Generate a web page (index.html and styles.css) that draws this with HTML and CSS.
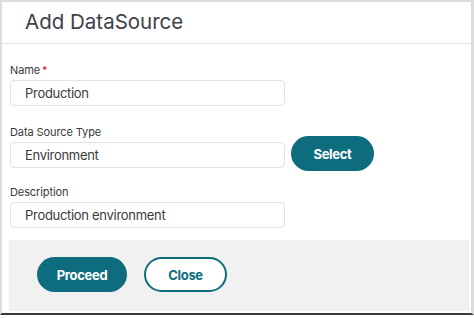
FILE: index.html
```html
<!DOCTYPE html>
<html lang="en">
<head>
    <meta charset="UTF-8">
    <title>Add DataSource</title>
    <link rel="stylesheet" href="styles.css">
</head>
<body>
<div class="dialog">
    <div class="dialog-header">Add DataSource</div>
    <div class="dialog-body">
        <label class="field-label">Name<span class="required">*</span></label>
        <div class="input">Production</div>

        <label class="field-label">Data Source Type</label>
        <div class="input-row">
            <div class="input">Environment</div>
            <button class="btn btn-primary btn-select">Select</button>
        </div>

        <label class="field-label">Description</label>
        <div class="input input-last">Production environment</div>
    </div>
    <div class="dialog-footer">
        <button class="btn btn-primary btn-proceed">Proceed</button>
        <button class="btn btn-outline">Close</button>
    </div>
</div>
</body>
</html>
```

FILE: styles.css
```css
body {
    margin: 0;
    background: white;
    font-family: Inter, "Noto Sans", Arial, sans-serif;
}

.dialog {
    width: 474px;
    height: 315px;
    box-sizing: border-box;
    border-top: 2px solid #dcdcdc;
    border-left: 2px solid #dcdcdc;
    border-right: 3px solid #dcdcdc;
    border-bottom: 2px solid #3a3a3a;
    background: white;
}

.dialog-header {
    height: 42px;
    box-sizing: border-box;
    padding: 6px 0 0 23px;
    font-size: 20.5px;
    line-height: 28px;
    color: #404048;
    border-bottom: 1px solid #e4e4e4;
}

.dialog-body {
    padding: 18px 0 0 8px;
}

.field-label {
    display: block;
    font-size: 11px;
    line-height: 16px;
    letter-spacing: -0.1px;
    color: #3a3a3a;
    margin-bottom: 2px;
}

.required {
    color: #d0021b;
    font-size: 10px;
    vertical-align: top;
    margin-left: 2px;
}

.input {
    width: 275px;
    height: 26px;
    box-sizing: border-box;
    border: 1px solid #e2e2e2;
    border-radius: 4px;
    padding-left: 14px;
    font-size: 13px;
    letter-spacing: -0.3px;
    line-height: 24px;
    color: #3a3a3a;
    margin-bottom: 18px;
}

.input-row {
    display: flex;
    align-items: center;
    height: 26px;
    margin-bottom: 16px;
}

.input-row .input {
    margin-bottom: 0;
}

.input-last {
    margin-bottom: 12px;
}

.btn {
    height: 35px;
    flex-shrink: 0;
    box-sizing: border-box;
    border-radius: 18px;
    font-family: inherit;
    font-size: 13px;
    letter-spacing: -0.3px;
    font-weight: 700;
    cursor: pointer;
}

.btn-primary {
    background: #0d6c7e;
    border: none;
    color: white;
}

.btn-select {
    width: 83px;
    margin-left: 6px;
    margin-top: -3px;
}

.dialog-footer {
    margin: 1px 2px 0 7px;
    height: 71px;
    box-sizing: border-box;
    background: #f1f1f1;
    padding: 17px 0 0 28px;
    display: flex;
    align-items: flex-start;
    gap: 17px;
}

.btn-proceed {
    width: 90px;
}

.btn-outline {
    width: 83px;
    background: white;
    border: 2px solid #0d6c7e;
    color: #0d6c7e;
}
```
